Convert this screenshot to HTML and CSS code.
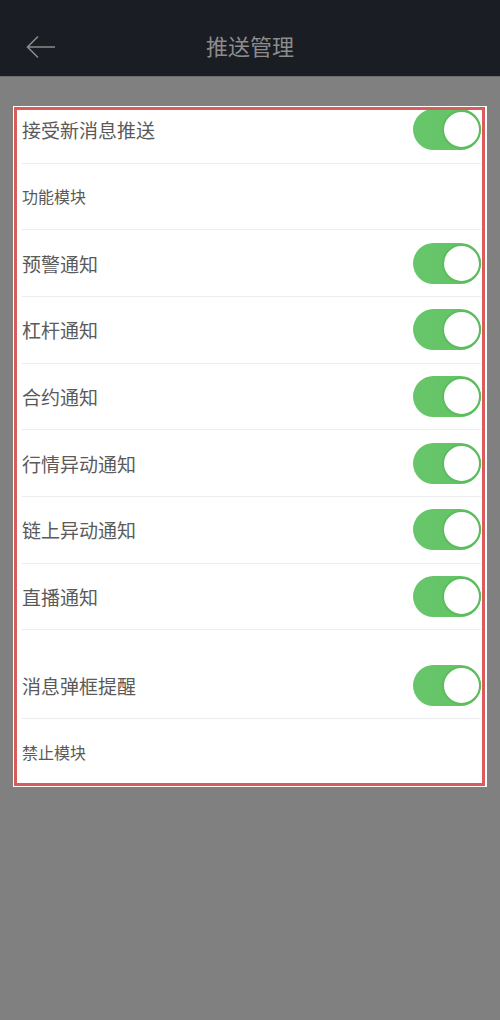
FILE: index.html
```html
<!DOCTYPE html>
<html lang="zh">
<head>
    <meta charset="UTF-8">
    <meta name="viewport" content="width=device-width, initial-scale=1.0">
    <title>推送管理</title>
    <link rel="stylesheet" href="styles.css">
</head>
<body>
    <!-- 顶部导航 -->
    <div class="header">
        <span class="back">
            <svg width="30" height="24" viewBox="0 0 30 24">
                <path d="M29 12H2M12 1.5L1.5 12L12 22.5" fill="none" stroke="#8a8a8a" stroke-width="1.6"/>
            </svg>
        </span>
        <span class="title">推送管理</span>
    </div>

    <!-- 设置列表 -->
    <div class="panel">
        <div class="panel-inner">
            <div class="list">
                <div class="row"><span class="label">接受新消息推送</span><span class="switch on"></span></div>
                <div class="row section"><span class="label">功能模块</span></div>
                <div class="row"><span class="label">预警通知</span><span class="switch on"></span></div>
                <div class="row"><span class="label">杠杆通知</span><span class="switch on"></span></div>
                <div class="row"><span class="label">合约通知</span><span class="switch on"></span></div>
                <div class="row"><span class="label">行情异动通知</span><span class="switch on"></span></div>
                <div class="row"><span class="label">链上异动通知</span><span class="switch on"></span></div>
                <div class="row"><span class="label">直播通知</span><span class="switch on"></span></div>
                <div class="gap"></div>
                <div class="row"><span class="label">消息弹框提醒</span><span class="switch on"></span></div>
                <div class="row section last"><span class="label">禁止模块</span></div>
            </div>
        </div>
    </div>
</body>
</html>
```

FILE: styles.css
```css
body {
    margin: 0;
    background: #808080;
    font-family: "Noto Sans CJK SC", "Noto Sans", sans-serif;
}

/* 顶部导航 */
.header {
    height: 76px;
    background: #1b1d25;
    border-bottom: 1px solid #6c6c6c;
    display: flex;
    align-items: center;
    justify-content: center;
    position: relative;
}

.back {
    position: absolute;
    left: 26px;
    top: 35px;
    display: flex;
}

.title {
    color: #8c8c8c;
    font-size: 22px;
    margin-top: 14px;
}

/* 白色面板 + 红框 */
.panel {
    margin: 29px 0 0 13px;
    width: 474px;
    box-sizing: border-box;
    background: #fff;
    padding: 1px 2px 1px 1px;
}

.panel-inner {
    border: 3px solid #d95b5b;
    height: 673px;
    overflow: hidden;
}

.list {
    margin-top: -13px;
}

.row {
    height: 66.67px;
    box-sizing: border-box;
    margin: 0 1px 0 5px;
    border-bottom: 1px solid #ececec;
    display: flex;
    align-items: center;
    justify-content: space-between;
}

.row .label {
    color: #5a5a5a;
    font-size: 19px;
}

.row.section .label {
    font-size: 16px;
}

.row.last {
    border-bottom: none;
}

.gap {
    height: 22px;
}

/* 开关 */
.switch {
    width: 68px;
    height: 41px;
    border-radius: 21px;
    background: linear-gradient(90deg, #68c66a 0%, #64c466 60%, #58b85a 100%);
    position: relative;
    flex-shrink: 0;
}

.switch::after {
    content: '';
    position: absolute;
    right: 0;
    top: 1px;
    width: 39px;
    height: 39px;
    box-sizing: border-box;
    border-radius: 50%;
    background: #fff;
    border: 2px solid #5cbd5e;
}
```
